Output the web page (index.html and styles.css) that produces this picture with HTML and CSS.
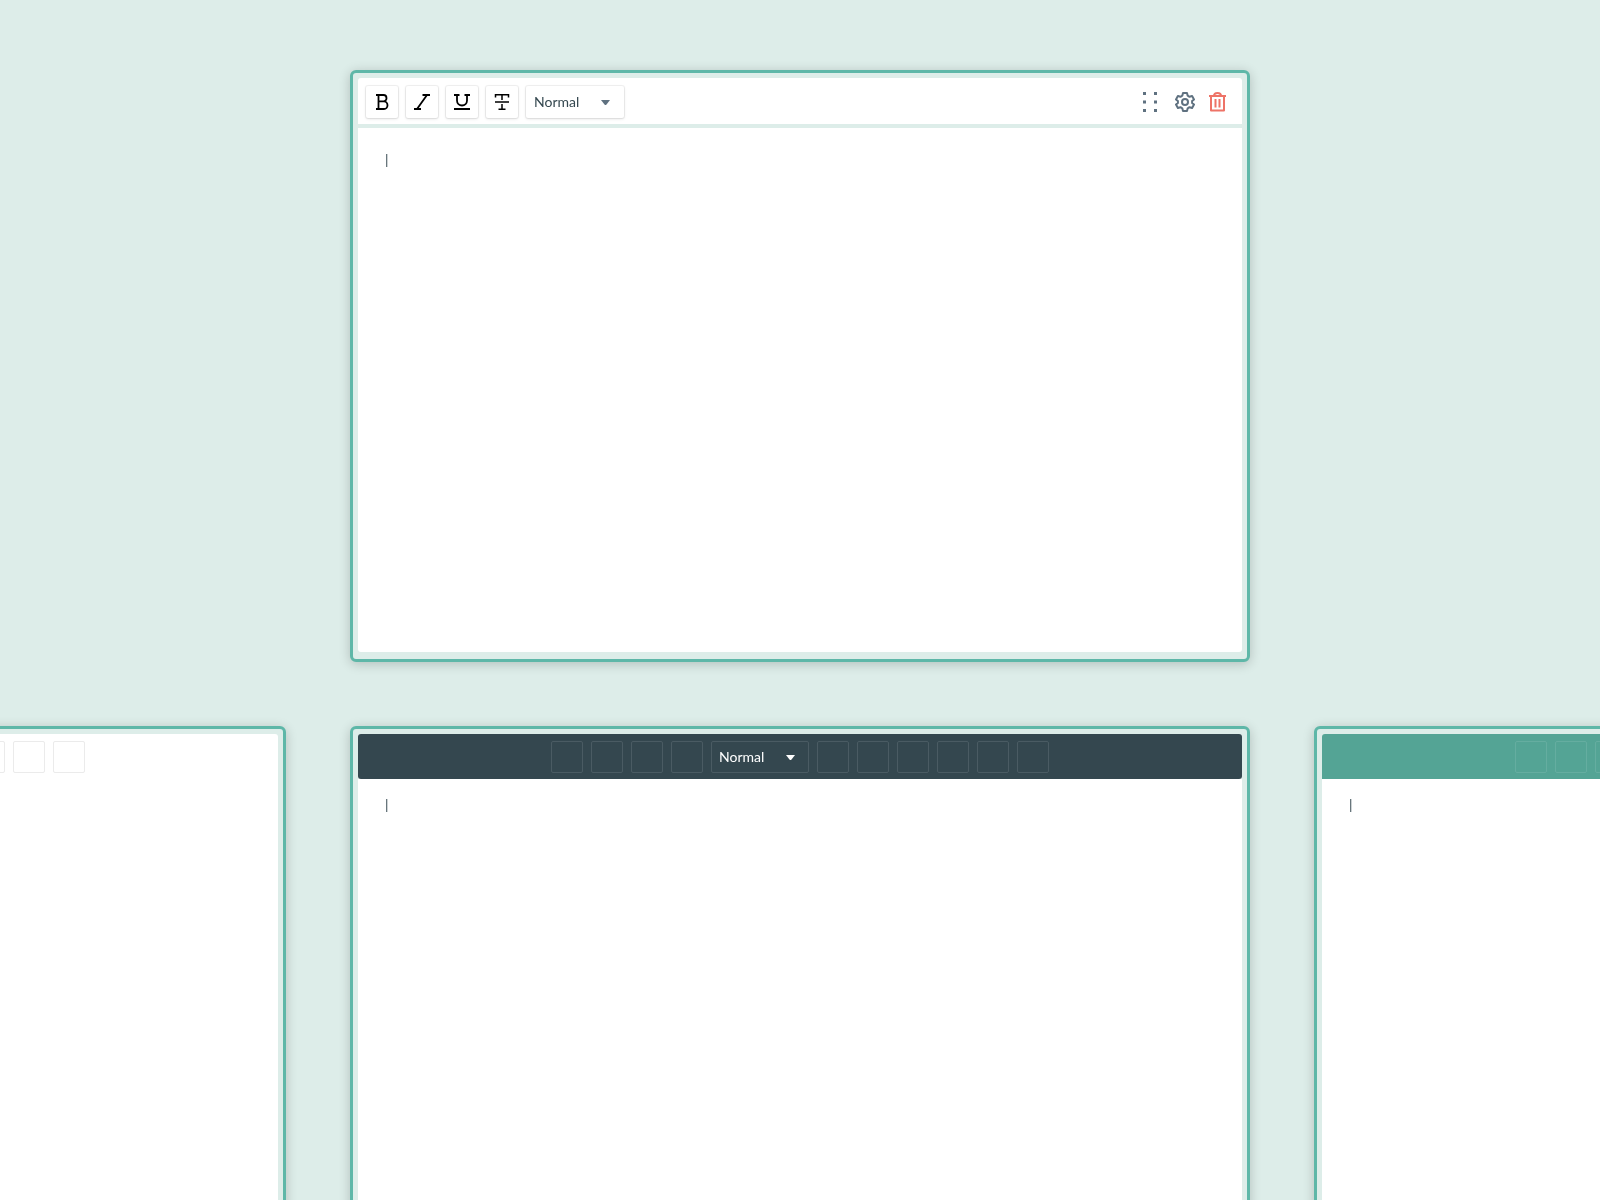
FILE: index.html
```html
<!DOCTYPE html>
<html lang="en">
<head>
<meta charset="utf-8">
<title>Rich text editor</title>
<link rel="stylesheet" href="styles.css">
</head>
<body>
<main class="board">
  <div class="row">
    <section class="editor editor-light">
      <div class="toolbar">
        <button class="tool" aria-label="Bold"><svg width="24" height="24" viewBox="0 0 24 24"><path d="M6 5H13.500A3 3.200 0 0 1 13.500 11.400H8.500M13.500 11.400H14A3.500 3.800 0 0 1 14 19H6M8.500 5V19"/></svg></button>
        <button class="tool" aria-label="Italic"><svg width="24" height="24" viewBox="0 0 24 24"><path d="M12.500 5H20M4 19H11M17 5L7 19"/></svg></button>
        <button class="tool" aria-label="Underline"><svg width="24" height="24" viewBox="0 0 24 24"><path d="M4 5H9.500M14.500 5H20M7 5V10.500A5 5 0 0 0 17 10.500V5M4 19H20"/></svg></button>
        <button class="tool" aria-label="Strikethrough"><svg width="24" height="24" viewBox="0 0 24 24"><path class="thin" d="M5.500 7.500V4.800H18.500V7.500M12 4.800V10M12 14V19.200M8.500 19.200H15.500M5 12H19"/></svg></button>
        <span class="picker"><select aria-label="Text style"><option>Normal</option></select><svg class="arrow" width="9" height="5" viewBox="0 0 9 5"><path d="M0 0H9L5.500 4.500Q4.500 5.500 3.500 4.500Z"/></svg></span>
        <div class="actions">
          <button class="action move" aria-label="Move"><svg width="14" height="20" viewBox="0 0 14 20"><path class="dots" d="M0 0h3v3H0zM11 0h3v3h-3zM0 8.500h3v3H0zM11 8.500h3v3h-3zM0 17h3v3H0zM11 17h3v3h-3z"/></svg></button>
          <button class="action" aria-label="Settings"><svg width="20" height="20" viewBox="0 0 20 20"><path d="M8 1H12L12.700 3.700L14.500 4.800L17.100 4L19 7.400L17.100 9V11L19 12.600L17.100 16L14.500 15.200L12.700 16.300L12 19H8L7.300 16.300L5.500 15.200L2.900 16L1 12.600L2.900 11V9L1 7.400L2.900 4L5.500 4.800L7.300 3.700Z"/><circle cx="10" cy="10" r="3"/></svg></button>
          <button class="action delete" aria-label="Delete"><svg width="18" height="20" viewBox="0 0 18 20"><path d="M0 4H17M2 4V18.500H15V4M5 4C5 0 12 0 12 4"/><path class="ribs" d="M6.500 7V15.500M10.500 7V15.500"/></svg></button>
        </div>
      </div>
      <textarea class="page" aria-label="Document" spellcheck="false">|</textarea>
    </section>
  </div>
  <div class="row">
    <section class="editor editor-plain">
      <div class="toolbar">
        <button class="tool" aria-label="Bold"></button>
        <button class="tool" aria-label="Italic"></button>
        <button class="tool" aria-label="Underline"></button>
        <button class="tool" aria-label="Strikethrough"></button>
        <span class="picker"><select aria-label="Text style"><option>Normal</option></select><svg class="arrow" width="9" height="5" viewBox="0 0 9 5"><path d="M0 0H9L5.500 4.500Q4.500 5.500 3.500 4.500Z"/></svg></span>
        <button class="tool" aria-label="Bullets"></button>
        <button class="tool" aria-label="Numbers"></button>
        <button class="tool" aria-label="Quote"></button>
        <button class="tool" aria-label="Link"></button>
        <button class="tool" aria-label="Image"></button>
        <button class="tool" aria-label="Code"></button>
      </div>
      <textarea class="page" aria-label="Document" spellcheck="false">|</textarea>
    </section>
    <section class="editor editor-dark">
      <div class="toolbar">
        <button class="tool" aria-label="Bold"></button>
        <button class="tool" aria-label="Italic"></button>
        <button class="tool" aria-label="Underline"></button>
        <button class="tool" aria-label="Strikethrough"></button>
        <span class="picker"><select aria-label="Text style"><option>Normal</option></select><svg class="arrow" width="9" height="5" viewBox="0 0 9 5"><path d="M0 0H9L5.500 4.500Q4.500 5.500 3.500 4.500Z"/></svg></span>
        <button class="tool" aria-label="Bullets"></button>
        <button class="tool" aria-label="Numbers"></button>
        <button class="tool" aria-label="Quote"></button>
        <button class="tool" aria-label="Link"></button>
        <button class="tool" aria-label="Image"></button>
        <button class="tool" aria-label="Code"></button>
      </div>
      <textarea class="page" aria-label="Document" spellcheck="false">|</textarea>
    </section>
    <section class="editor editor-green">
      <div class="toolbar">
        <button class="tool" aria-label="Bold"></button>
        <button class="tool" aria-label="Italic"></button>
        <button class="tool" aria-label="Underline"></button>
        <button class="tool" aria-label="Strikethrough"></button>
        <span class="picker"><select aria-label="Text style"><option>Normal</option></select><svg class="arrow" width="9" height="5" viewBox="0 0 9 5"><path d="M0 0H9L5.500 4.500Q4.500 5.500 3.500 4.500Z"/></svg></span>
        <button class="tool" aria-label="Bullets"></button>
        <button class="tool" aria-label="Numbers"></button>
        <button class="tool" aria-label="Quote"></button>
        <button class="tool" aria-label="Link"></button>
        <button class="tool" aria-label="Image"></button>
        <button class="tool" aria-label="Code"></button>
      </div>
      <textarea class="page" aria-label="Document" spellcheck="false">|</textarea>
    </section>
  </div>
</main>
</body>
</html>
```

FILE: styles.css
```css
* {
  box-sizing: border-box;
}

body {
  margin: 0;
  background: #ddede9;
  color: #34474f;
  font-family: Lato, sans-serif;
}

.board {
  display: flex;
  flex-direction: column;
  gap: 64px;
  height: 100vh;
  padding-top: 70px;
  overflow: hidden;
  will-change: transform;
}

.row {
  display: flex;
  flex: none;
  justify-content: center;
  gap: 64px;
}

.editor {
  display: flex;
  flex: 0 0 min(900px, 100%);
  flex-direction: column;
  padding: 5px 5px 7px;
  border: 3px solid #5eb7a8;
  border-radius: 6px;
  background: #ddede9;
  box-shadow: 0 2px 12px rgba(0, 0, 0, 0.2);
}

.toolbar {
  display: flex;
  align-items: flex-start;
  justify-content: center;
  gap: 8px;
  height: 45px;
  padding: 7px 8px;
  border-radius: 3px 3px 0 0;
  background: #fff;
}

.tool,
.picker {
  height: 32px;
  border: 1px solid #ebebeb;
  border-radius: 2px;
}

.tool {
  display: flex;
  align-items: center;
  justify-content: center;
  width: 32px;
  padding: 0;
  background: transparent;
}

.tool path {
  fill: none;
  stroke: #000;
  stroke-width: 1.8;
}

.tool .thin {
  stroke-width: 1.5;
}

.tool svg {
  flex: none;
}

.picker {
  display: flex;
  align-items: center;
  width: 98px;
  padding: 0 13px 0 7px;
}

.picker select {
  flex: 1;
  min-width: 0;
  height: 100%;
  padding: 0;
  border: 0;
  appearance: none;
  background: transparent;
  color: inherit;
  font: 14px/20px Lato, sans-serif;
}

.arrow {
  flex: none;
  fill: #5f7180;
}

.page {
  display: block;
  width: 100%;
  height: 524px;
  padding: 16px 27px;
  border: 0;
  border-radius: 0 0 3px 3px;
  outline: 0;
  resize: none;
  background: #fff;
  color: #34474f;
  font: 14px/20px Lato, sans-serif;
}

.editor-light {
  gap: 4px;
}

.editor-light .toolbar {
  justify-content: flex-start;
  height: 46px;
  padding: 8px;
}

.editor-light .tool,
.editor-light .picker {
  border: 0;
  box-shadow: 0 0 0 1px rgba(0, 0, 0, 0.05), 0 1px 3px rgba(0, 0, 0, 0.12);
}

.editor-light .picker {
  padding: 0 14px 0 8px;
}

.editor-light .page {
  padding-top: 22px;
}

.actions {
  display: flex;
  align-items: center;
  gap: 14px;
  height: 32px;
  margin-left: auto;
  padding-right: 7px;
}

.action {
  display: flex;
  padding: 0;
  border: 0;
  background: transparent;
}

.move {
  margin-right: 4px;
}

.action path,
.action circle {
  fill: none;
  stroke: #5f7180;
  stroke-width: 2;
  stroke-linejoin: round;
}

.action .dots {
  fill: #5f7180;
  stroke: none;
}

.delete path {
  stroke: #ee7367;
}

.editor-dark .toolbar {
  border-radius: 3px;
  background: #34474f;
  color: #fff;
}

.editor-dark .tool,
.editor-dark .picker {
  border-color: #4a5b63;
}

.editor-dark .arrow,
.editor-green .arrow {
  fill: #fff;
}

.editor-green .toolbar {
  background: #54a495;
  color: #fff;
}

.editor-green .tool,
.editor-green .picker {
  border-color: #65ada0;
}
```
